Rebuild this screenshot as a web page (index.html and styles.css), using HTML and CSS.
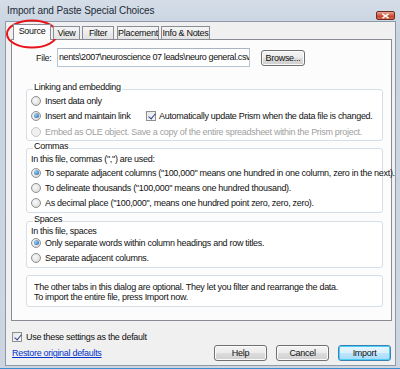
FILE: index.html
```html
<!DOCTYPE html>
<html>
<head>
<meta charset="utf-8">
<link rel="stylesheet" href="styles.css">
</head>
<body>
<div class="window">
  <div class="titlebar">
    <span class="title">Import and Paste Special Choices</span>
    <span class="close"><svg width="9" height="6" viewBox="0 0 9 6"><path d="M1.5 0.8 L7.5 5.2 M7.5 0.8 L1.5 5.2" stroke="#fff" stroke-width="1.6"/></svg></span>
  </div>
  <div class="client">
    <div class="tabs">
      <div class="tab active t-source">Source</div>
      <div class="tab t-view">View</div>
      <div class="tab t-filter">Filter</div>
      <div class="tab t-place">Placement</div>
      <div class="tab t-info">Info &amp; Notes</div>
    </div>
    <div class="panel">
      <div class="file-row">
        <span class="file-label">File:</span>
        <div class="input">nents\2007\neuroscience 07 leads\neuro general.csv</div>
        <div class="btn browse">Browse...</div>
      </div>

      <div class="group g-link">
        <div class="group-title">Linking and embedding</div>
        <div class="row"><span class="radio"></span>Insert data only</div>
        <div class="row">
          <span class="radio on"></span><span class="w-link">Insert and maintain link</span>
          <span class="check on"></span>Automatically update Prism when the data file is changed.
        </div>
        <div class="row disabled"><span class="radio dis"></span>Embed as OLE object. Save a copy of the entire spreadsheet within the Prism project.</div>
      </div>

      <div class="group g-commas">
        <div class="group-title">Commas</div>
        <div class="row plain">In this file, commas (",") are used:</div>
        <div class="row">
          <span class="radio on"></span>To separate adjacent columns ("100,000" means one hundred in one column, zero in the next).</div>
        <div class="row"><span class="radio"></span>To delineate thousands ("100,000" means one hundred thousand).</div>
        <div class="row"><span class="radio"></span>As decimal place ("100,000", means one hundred point zero, zero, zero).</div>
      </div>

      <div class="group g-spaces">
        <div class="group-title">Spaces</div>
        <div class="row plain">In this file, spaces</div>
        <div class="row r1"><span class="radio on"></span>Only separate words within column headings and row titles.</div>
        <div class="row r2"><span class="radio"></span>Separate adjacent columns.</div>
      </div>

      <div class="note">
        <div>The other tabs in this dialog are optional. They let you filter and rearrange the data.</div>
        <div>To import the entire file, press Import now.</div>
      </div>
    </div>

    <div class="footer">
      <div class="footer-left">
        <div class="row"><span class="check on"></span>Use these settings as the default</div>
        <a class="link" href="#">Restore original defaults</a>
      </div>
      <div class="buttons">
        <div class="btn wide">Help</div>
        <div class="btn wide">Cancel</div>
        <div class="btn wide default">Import</div>
      </div>
    </div>
  </div>
  <svg class="ring" width="56" height="34" viewBox="0 0 56 34"><ellipse cx="28" cy="17" rx="25" ry="13.5" fill="none" stroke="#e8141b" stroke-width="2"/></svg>
</div>
</body>
</html>
```

FILE: styles.css
```css
* { box-sizing: border-box; }
html, body { margin: 0; padding: 0; }
body {
  width: 400px;
  height: 369px;
  overflow: hidden;
  font-family: "Liberation Sans", Arial, sans-serif;
  font-size: 9px;
  letter-spacing: -0.3px;
  color: #1a1a1a;
}
.window {
  position: relative;
  width: 400px;
  height: 369px;
  background: linear-gradient(#d4dde8, #c9d4e1 30px, #cdd6e0);
  padding: 0 4px 2px 5px;
  display: flex;
  flex-direction: column;
  border-bottom: 1px solid #3a8fd0;
}
.titlebar {
  height: 21px;
  display: flex;
  align-items: center;
  justify-content: space-between;
  padding: 0 1px 0 2px;
  flex-shrink: 0;
}
.title {
  font-size: 10px;
  letter-spacing: -0.1px;
  color: #1e2a36;
  margin-top: -1px;
}
.close {
  width: 19px;
  height: 9px;
  border-radius: 2px;
  border: 1px solid #6f2b22;
  background: linear-gradient(#e8a593, #d0573e 50%, #c23a22 51%, #d66a4a);
  display: flex;
  align-items: center;
  justify-content: center;
  align-self: flex-end;
  margin-bottom: 1px;
}
.client {
  flex: 1;
  background: #f0f0f0;
  border: 1px solid #8d9aa8;
  padding: 2px 3px 0 5px;
  display: flex;
  flex-direction: column;
}
.tabs {
  display: flex;
  align-items: flex-end;
  height: 15px;
  padding-left: 2px;
  position: relative;
  z-index: 2;
}
.tab {
  height: 13px;
  border: 1px solid #898c95;
  border-bottom: none;
  background: linear-gradient(#f5f5f5, #e2e2e2);
  line-height: 12px;
  text-align: center;
  margin-left: 2px;
  color: #111;
  white-space: nowrap;
}
.t-source { width: 38px; }
.t-view { width: 27px; }
.t-filter { width: 32px; }
.t-place { width: 42px; margin-left: 3px; letter-spacing: -0.3px; }
.t-info { width: 49px; letter-spacing: -0.3px; }
.tab.active {
  height: 16px;
  background: #fcfcfc;
  margin-left: 0;
  line-height: 13px;
  position: relative;
  top: 1px;
}
.panel {
  border: 1px solid #898c95;
  background: #fcfcfc;
  height: 282px;
  padding: 8px 7px 0 14px;
}
.file-row {
  display: flex;
  align-items: center;
  height: 19px;
}
.file-label { width: 21px; margin-left: 10px; }
.input {
  width: 193px;
  height: 19px;
  border: 1px solid #b6c3d2;
  border-top-color: #a9b4c0;
  background: #fff;
  line-height: 17px;
  padding-left: 1px;
  white-space: nowrap;
  overflow: hidden;
  color: #111;
  letter-spacing: -0.4px;
}
.btn {
  height: 16px;
  border: 1px solid #707070;
  border-radius: 3px;
  background: linear-gradient(#f4f4f4, #ebebeb 50%, #dddddd 51%, #cfcfcf);
  display: flex;
  align-items: center;
  justify-content: center;
  box-shadow: inset 0 0 0 1px #fbfbfb;
  color: #111;
}
.browse {
  width: 44px;
  margin-left: 11px;
}
.group {
  width: 357px;
  border: 1px solid #d5dfe5;
  border-radius: 3px;
  background: #fff;
  padding: 0 0 0 4px;
}
.group-title {
  width: fit-content;
  background: #fff;
  margin: -8px 0 0 2px;
  padding: 0 1px;
  line-height: 11px;
  color: #111;
}
.row {
  display: flex;
  align-items: center;
  height: 15px;
  white-space: nowrap;
  color: #111;
}
.g-link { margin-top: 22px; height: 52px; }
.row.disabled { color: #a0a0a0; height: 16px; margin-top: 1px; }
.g-commas { margin-top: 7px; height: 65px; }
.g-commas .row.plain { height: 13px; }
.g-spaces { margin-top: 8px; height: 47px; }
.g-spaces .row.plain { height: 11px; }
.g-spaces .r1 { height: 13px; }
.g-spaces .r2 { height: 16px; margin-top: 1px; }
.radio {
  width: 10px;
  height: 10px;
  border-radius: 50%;
  border: 1px solid #8e8f8f;
  background: radial-gradient(circle at 40% 40%, #fafafa, #d4d4d4);
  margin-right: 4px;
  flex-shrink: 0;
  position: relative;
}
.radio.on::after {
  content: "";
  position: absolute;
  left: 1.5px;
  top: 1.5px;
  width: 5px;
  height: 5px;
  border-radius: 50%;
  background: radial-gradient(circle at 35% 35%, #9ad3f5, #1d5aa8);
}
.radio.dis { border-color: #c8c8c8; background: #f0f0f0; }
.w-link { width: 101px; }
.check {
  width: 10px;
  height: 10px;
  border: 1px solid #8e8f8f;
  background: linear-gradient(135deg, #e6e6e6, #fafafa);
  margin-right: 3px;
  flex-shrink: 0;
  position: relative;
}
.check.on::after {
  content: "";
  position: absolute;
  left: 2.5px;
  top: 0px;
  width: 3px;
  height: 6px;
  border: solid #2b3e8c;
  border-width: 0 1.5px 1.5px 0;
  transform: rotate(40deg);
}
.note {
  width: 357px;
  height: 32px;
  margin-top: 7px;
  border: 1px solid #d5dfe5;
  border-radius: 3px;
  background: #fff;
  padding: 6px 0 0 7px;
  line-height: 10px;
  color: #111;
}
.footer {
  display: flex;
  justify-content: space-between;
  align-items: flex-start;
  padding: 9px 1px 0 1px;
  flex: 1;
}
.footer-left {
  display: flex;
  flex-direction: column;
  gap: 5px;
}
.footer-left .row { height: 13px; }
.footer-left .check { margin-right: 4px; }
.link {
  color: #0033cc;
  text-decoration: underline;
  line-height: 11px;
}
.buttons {
  display: flex;
  gap: 9px;
  margin-top: 15px;
}
.btn.wide { width: 53px; }
.btn.default {
  border-color: #3c7fb1;
  box-shadow: inset 0 0 0 1px #48d0f8;
  background: linear-gradient(#eaf6fd, #d9f0fc 50%, #bee6fd 51%, #a7d9f5);
}
.ring {
  position: absolute;
  left: 4px;
  top: 17px;
}
```
